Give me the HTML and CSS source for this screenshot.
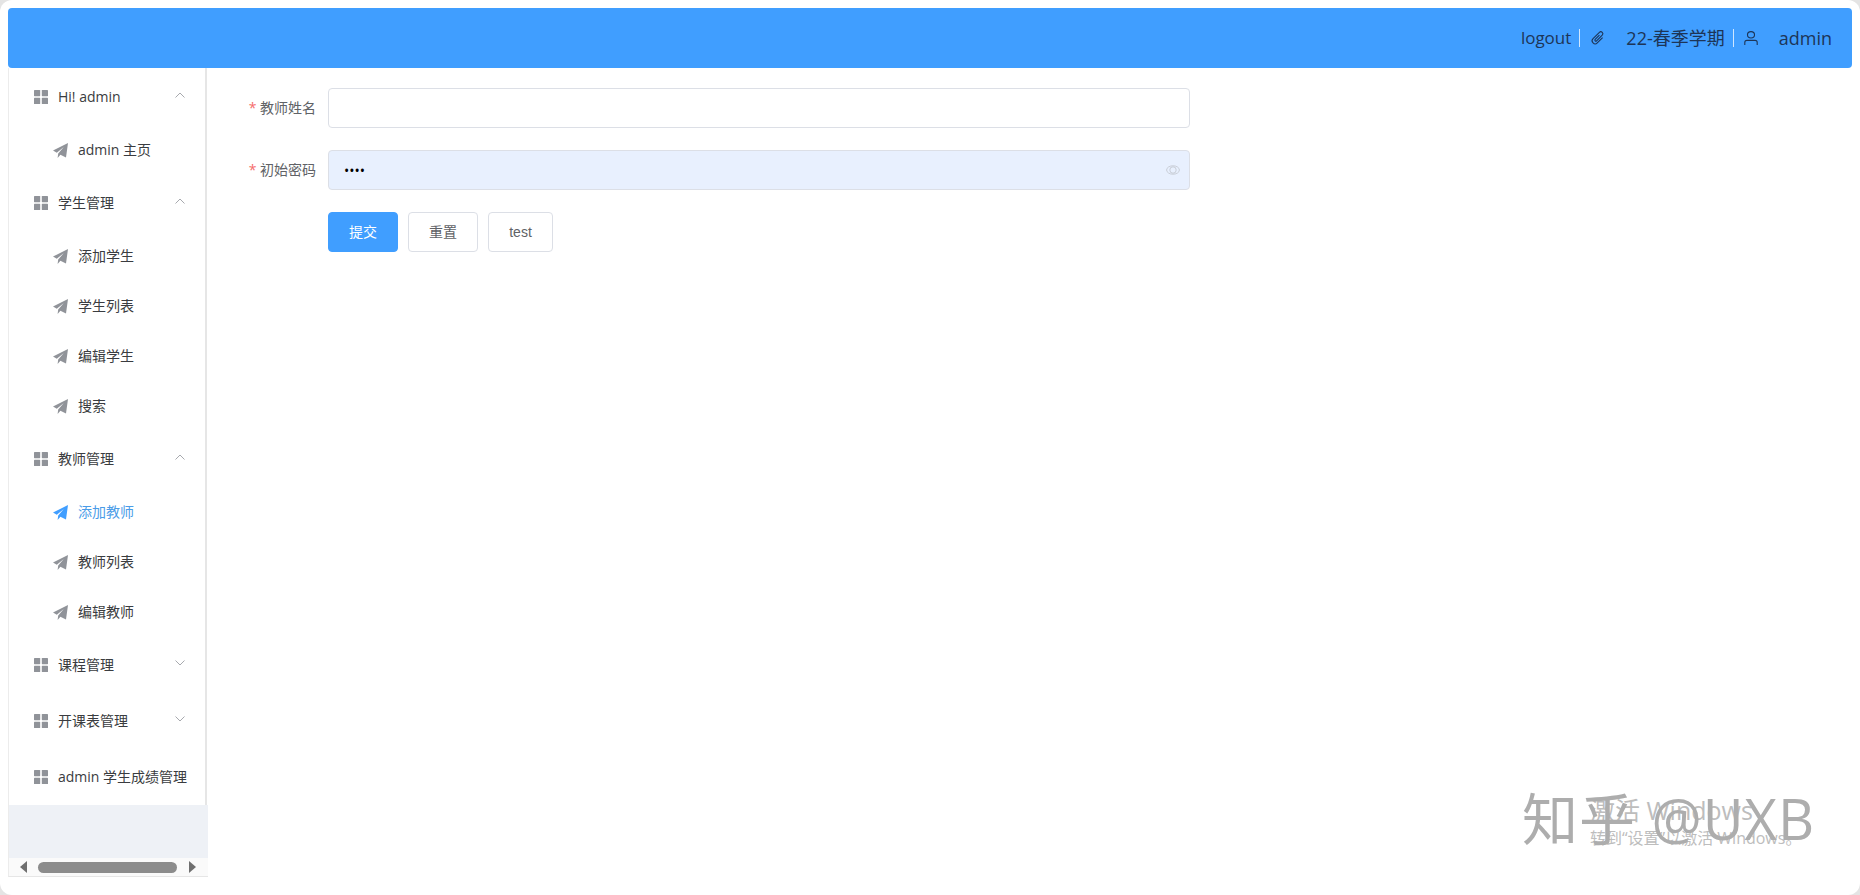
FILE: index.html

```html
<!DOCTYPE html>
<html lang="zh-CN">
<head>
  <meta charset="UTF-8">
  <title>添加教师</title>
  <link rel="stylesheet" href="styles.css">
</head>
<body>
  <svg class="sprites" width="0" height="0">
    <symbol id="i-menu" viewBox="0 0 14 14">
      <rect x="0" y="0" width="6.2" height="6.2" rx="0.6"/>
      <rect x="7.8" y="0" width="6.2" height="6.2" rx="0.6"/>
      <rect x="0" y="7.8" width="6.2" height="6.2" rx="0.6"/>
      <rect x="7.8" y="7.8" width="6.2" height="6.2" rx="0.6"/>
    </symbol>
    <symbol id="i-plane" viewBox="0 0 15 15">
      <path d="M15 0 L0 7.6 L3.8 9.8 L10.8 4 L5.2 10.6 L4.6 15 L7.4 11.8 L13 14.4 Z"/>
    </symbol>
    <symbol id="i-up" viewBox="0 0 10 6">
      <path d="M0.5 5.5 L5 1 L9.5 5.5" fill="none" stroke="currentColor" stroke-width="0.8"/>
    </symbol>
    <symbol id="i-down" viewBox="0 0 10 6">
      <path d="M0.5 0.5 L5 5 L9.5 0.5" fill="none" stroke="currentColor" stroke-width="0.8"/>
    </symbol>
  </svg>

  <header class="topbar">
    <span class="top-item logout">logout</span>
    <span class="top-sep"></span>
    <svg class="top-icon" viewBox="0 0 16 16" fill="none" stroke="currentColor" stroke-width="1.1">
      <path transform="rotate(45 8 8)" d="M11 4.5 V12 a3 3 0 0 1 -6 0 V3 a2 2 0 0 1 4 0 V11 a1 1 0 0 1 -2 0 V5"/>
    </svg>
    <span class="top-item term">22-春季学期</span>
    <span class="top-sep"></span>
    <svg class="top-icon user" viewBox="0 0 14 14" fill="none" stroke="currentColor" stroke-width="1.1">
      <ellipse cx="7" cy="3.8" rx="3.5" ry="3.2"/>
      <path d="M0.8 14 V11.4 C0.8 10.2 1.8 9.4 3 9.4 H11 C12.2 9.4 13.2 10.2 13.2 11.4 V14"/>
    </svg>
    <span class="top-item name">admin</span>
  </header>

  <div class="layout">
    <aside class="sidebar">
      <nav class="menu">
        <div class="menu-title"><svg class="ico-menu"><use href="#i-menu"/></svg><span>Hi! admin</span><svg class="arrow"><use href="#i-up"/></svg></div>
        <div class="menu-item"><svg class="ico-plane"><use href="#i-plane"/></svg><span>admin 主页</span></div>

        <div class="menu-title"><svg class="ico-menu"><use href="#i-menu"/></svg><span>学生管理</span><svg class="arrow"><use href="#i-up"/></svg></div>
        <div class="menu-item"><svg class="ico-plane"><use href="#i-plane"/></svg><span>添加学生</span></div>
        <div class="menu-item"><svg class="ico-plane"><use href="#i-plane"/></svg><span>学生列表</span></div>
        <div class="menu-item"><svg class="ico-plane"><use href="#i-plane"/></svg><span>编辑学生</span></div>
        <div class="menu-item"><svg class="ico-plane"><use href="#i-plane"/></svg><span>搜索</span></div>

        <div class="menu-title"><svg class="ico-menu"><use href="#i-menu"/></svg><span>教师管理</span><svg class="arrow"><use href="#i-up"/></svg></div>
        <div class="menu-item active"><svg class="ico-plane"><use href="#i-plane"/></svg><span>添加教师</span></div>
        <div class="menu-item"><svg class="ico-plane"><use href="#i-plane"/></svg><span>教师列表</span></div>
        <div class="menu-item"><svg class="ico-plane"><use href="#i-plane"/></svg><span>编辑教师</span></div>

        <div class="menu-title"><svg class="ico-menu"><use href="#i-menu"/></svg><span>课程管理</span><svg class="arrow"><use href="#i-down"/></svg></div>
        <div class="menu-title"><svg class="ico-menu"><use href="#i-menu"/></svg><span>开课表管理</span><svg class="arrow"><use href="#i-down"/></svg></div>
        <div class="menu-title"><svg class="ico-menu"><use href="#i-menu"/></svg><span>admin 学生成绩管理</span></div>
      </nav>
      <div class="side-fill"></div>
      <div class="hscroll">
        <span class="tri-left"></span>
        <span class="thumb"></span>
        <span class="tri-right"></span>
      </div>
    </aside>

    <main class="main">
      <form class="form">
        <div class="form-row">
          <label class="form-label"><i>*</i> 教师姓名</label>
          <div class="input-box"><input class="input" type="text"></div>
        </div>
        <div class="form-row">
          <label class="form-label"><i>*</i> 初始密码</label>
          <div class="input-box filled">
            <input class="input" type="password" value="test">
            <svg class="eye" viewBox="0 0 14 10" fill="none" stroke="currentColor" stroke-width="0.8">
              <ellipse cx="7" cy="5" rx="6.4" ry="4.2"/>
              <circle cx="7" cy="5" r="3.2"/>
            </svg>
          </div>
        </div>
        <div class="form-row btns">
          <button type="button" class="btn primary">提交</button>
          <button type="button" class="btn">重置</button>
          <button type="button" class="btn test">test</button>
        </div>
      </form>
    </main>
  </div>

  <!-- 水印 -->
  <div class="activate">
    <div class="activate-a">激活 Windows</div>
    <div class="activate-b">转到“设置”以激活 Windows。</div>
  </div>
  <div class="watermark">知乎 @UXB</div>
</body>
</html>
```

FILE: styles.css

```css
* { box-sizing: border-box; }
html { background: #e4e4e4; height: 100%; }
body { margin: 0; padding: 8px; height: 100vh; overflow: hidden; background: #fff; border-radius: 12px; position: relative; font-family: "Open Sans", "Noto Sans CJK SC", sans-serif; font-size: 14px; color: #3a3c40; }
.sprites { position: absolute; }

.topbar { height: 60px; background: #409eff; border-radius: 4px; display: flex; align-items: center; justify-content: flex-end; padding-right: 20px; color: #1d3557; }
.top-item { font-size: 18px; line-height: 24px; }
.top-item.logout { font-size: 17px; }
.top-item.term { margin-left: 20px; }
.top-item.name { margin-left: 21px; }
.top-sep { width: 1px; height: 18px; background: #cfe6ff; margin: 0 8px; }
.top-icon { width: 16px; height: 16px; margin-left: 2px; }
.top-icon.user { width: 14px; height: 14px; margin-left: 2px; }

.layout { display: flex; height: 809px; }
.sidebar { width: 200px; flex: none; display: flex; flex-direction: column; border-left: 1px solid #ececec; border-bottom: 1px solid #e6e6e6; }
.menu { padding-top: 1px; height: 737px; margin-right: 1px; border-right: 2px solid #e6e6e6; flex: none; }
.menu-title { height: 56px; display: flex; align-items: center; padding-left: 25px; padding-bottom: 2px; position: relative; white-space: nowrap; }
.menu-item { height: 50px; display: flex; align-items: center; padding-left: 44px; padding-bottom: 2px; white-space: nowrap; }
.menu-item.active { color: #4a9ce8; }
.menu-item.active .ico-plane { fill: #409eff; }
.ico-menu { width: 14px; height: 14px; fill: #909399; margin-right: 10px; flex: none; position: relative; top: 1px; }
.ico-plane { width: 15px; height: 15px; fill: #909399; margin-right: 10px; flex: none; position: relative; top: 1px; }
.arrow { width: 10px; height: 6px; color: #909399; position: absolute; left: 166px; top: 23px; }

.side-fill { height: 53px; background: #eef1f6; flex: none; }
.hscroll { flex: 1; background: #fafafa; display: flex; align-items: center; padding-left: 11px; }
.thumb { width: 139px; height: 11px; background: #8c8c8c; border-radius: 6px; margin: 0 12px 0 11px; }
.tri-left { border-style: solid; border-width: 6px 7px 6px 0; border-color: transparent #6f6f6f transparent transparent; }
.tri-right { border-style: solid; border-width: 6px 0 6px 7px; border-color: transparent transparent transparent #6f6f6f; }

.main { flex: 1; padding: 20px; }
.form-row { display: flex; align-items: center; height: 40px; margin-bottom: 22px; }
.form-label { width: 100px; padding: 0 12px 2px 0; text-align: right; color: #606266; white-space: nowrap; }
.form-label i { color: #f56c6c; font-style: normal; }
.input-box { width: 862px; height: 40px; border: 1px solid #dcdfe6; border-radius: 4px; display: flex; align-items: center; background: #fff; }
.input-box.filled { background: #e8f0fe; }
.input { flex: 1; height: 100%; border: 0; outline: 0; background: transparent; padding: 0 15px; font-family: inherit; font-size: 14px; color: #000; }
.eye { width: 14px; height: 10px; color: #c0c4cc; margin-right: 9px; flex: none; }

.btns { padding-left: 100px; }
.btn { height: 40px; width: 70px; margin-right: 10px; padding: 0 0 2px; border: 1px solid #dcdfe6; border-radius: 4px; background: #fff; color: #606266; font-family: inherit; font-size: 14px; }
.btn.primary { background: #409eff; border-color: #409eff; color: #fff; }
.btn.test { width: 65px; padding: 0; font-family: "Liberation Sans", sans-serif; }

.activate { position: absolute; left: 1590px; top: 794px; color: #bdbdbd; }
.activate-a { font-size: 25px; line-height: 32px; }
.activate-b { font-size: 16px; line-height: 22px; margin-top: 1px; }
.watermark { position: absolute; left: 1522px; top: 778px; font-size: 56px; letter-spacing: 1px; line-height: 80px; color: #adadad; white-space: nowrap; }
```
